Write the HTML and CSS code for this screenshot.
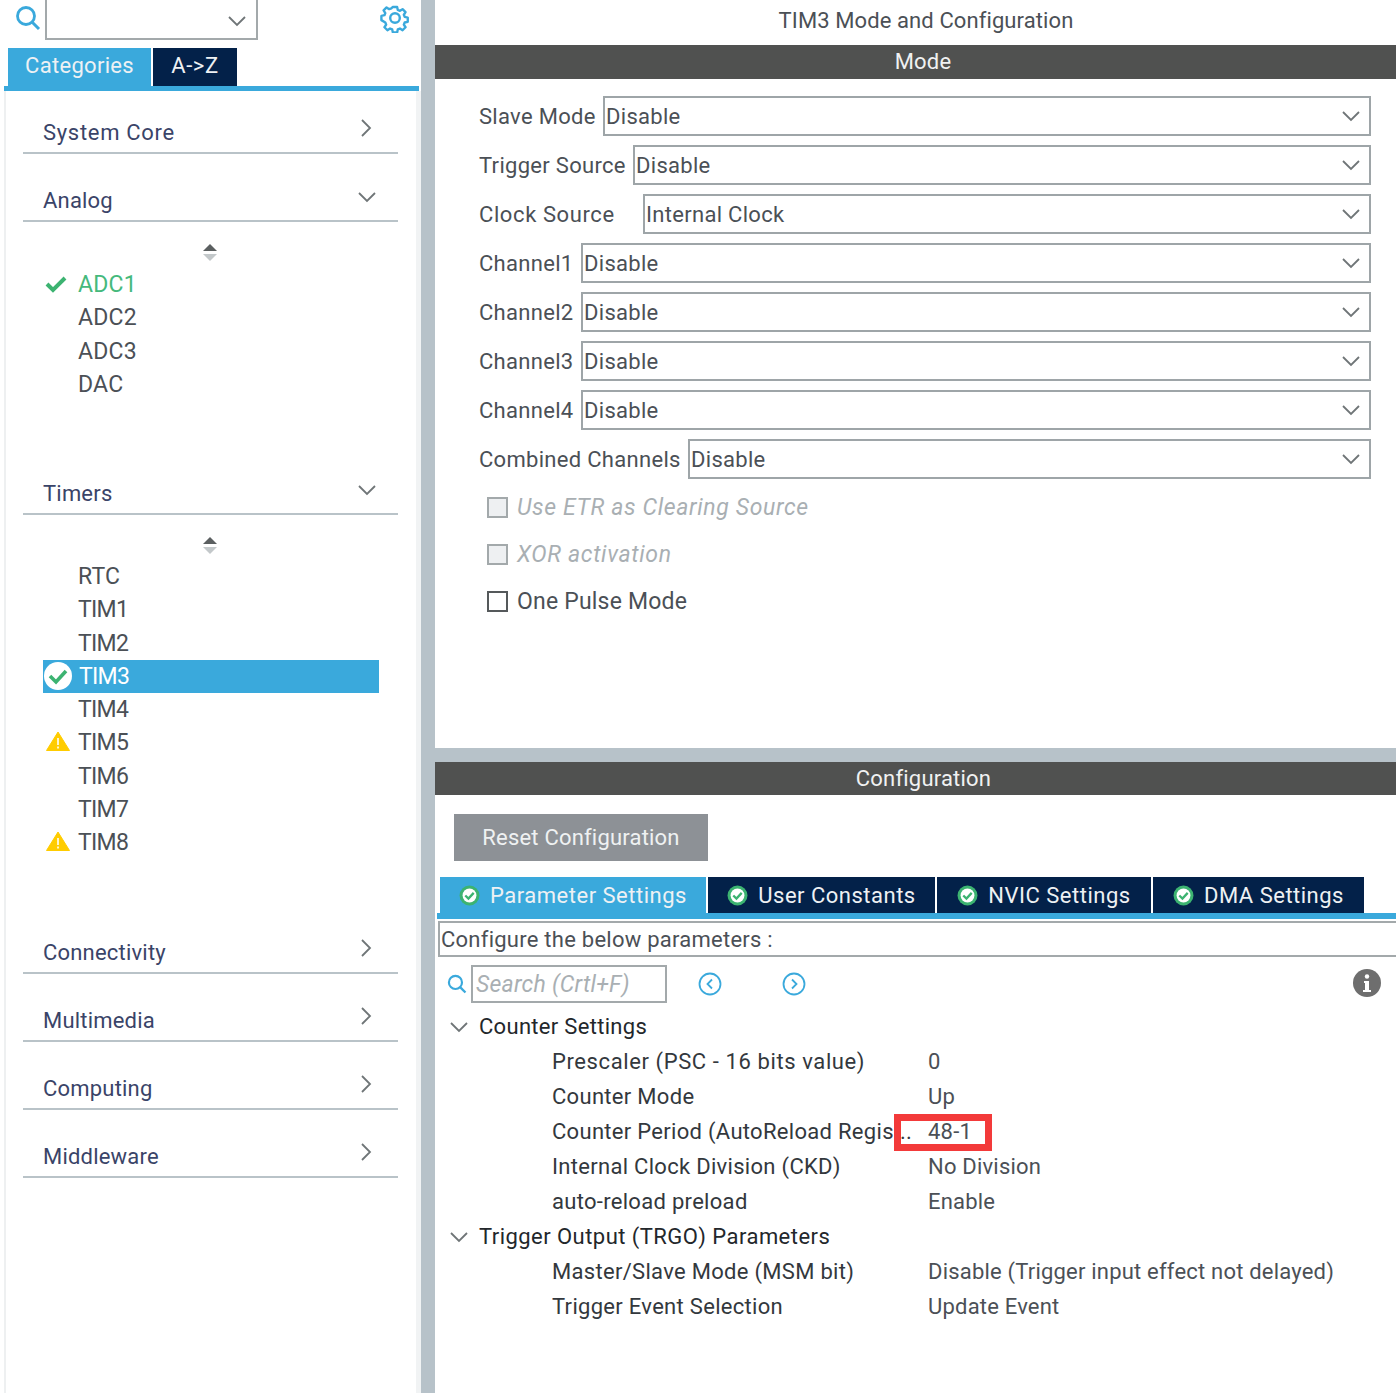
FILE: index.html
```html
<!DOCTYPE html>
<html lang="en">
<head>
<meta charset="utf-8">
<title>TIM3 Mode and Configuration</title>
<link rel="stylesheet" href="styles.css">
</head>
<body>
<svg width="0" height="0" class="defs">
  <symbol id="down" viewBox="0 0 20 12"><path d="M2 2l8 8 8-8" fill="none" stroke="#6f7577" stroke-width="1.8"/></symbol>
  <symbol id="right" viewBox="0 0 12 20"><path d="M2 2l8 8-8 8" fill="none" stroke="#6f7577" stroke-width="1.8"/></symbol>
  <symbol id="mag" viewBox="0 0 26 26"><circle cx="11" cy="11" r="8.5" fill="none" stroke="#3aa9dc" stroke-width="2.8"/><path d="M17 17l7 7" stroke="#3aa9dc" stroke-width="3"/></symbol>
  <symbol id="sort" viewBox="0 0 16 20"><path d="M8 1l7 7H1z" fill="#5b5f60"/><path d="M1 11h14l-7 7z" fill="#c3c8ca"/></symbol>
  <symbol id="warn" viewBox="0 0 24 20"><path d="M12 1L23.500 19.500H.5z" fill="#ffcc00" stroke="#ffcc00" stroke-linejoin="round"/><path d="M12 7v7M12 15.500v2" stroke="#fff" stroke-width="1.600"/></symbol>
  <symbol id="ok" viewBox="0 0 20 20"><circle cx="10" cy="10" r="9.500" fill="#3cb371"/><circle cx="10" cy="10" r="6.600" fill="#fff"/><path d="M6 10l3 3 5-5.500" fill="none" stroke="#3cb371" stroke-width="2.200"/></symbol>
</svg>

<div class="app">
  <aside class="side">
    <div class="topbar">
      <svg class="mag"><use href="#mag"/></svg>
      <div class="combo"><svg class="chev"><use href="#down"/></svg></div>
      <svg class="gear" viewBox="0 0 30 30"><path d="M12.500 2h5l.8 3.600 2.500 1 3.100-2 3.500 3.500-2 3.100 1 2.500 3.600.8v5l-3.600.8-1 2.500 2 3.100-3.500 3.500-3.100-2-2.500 1-.8 3.600h-5l-.8-3.600-2.500-1-3.100 2-3.500-3.500 2-3.100-1-2.500L-1 17.500v-5l3.600-.8 1-2.500-2-3.100 3.500-3.500 3.100 2 2.500-1z" transform="translate(2.250 2.250) scale(.85)" fill="none" stroke="#3aa9dc" stroke-width="2.800" stroke-linejoin="round"/><circle cx="15" cy="15" r="4.800" fill="none" stroke="#3aa9dc" stroke-width="2.400"/></svg>
    </div>
    <div class="tabs side-tabs">
      <div class="tab on">Categories</div>
      <div class="tab">A-&gt;Z</div>
    </div>
    <div class="cats">
      <div class="cat first">System Core<svg class="ar"><use href="#right"/></svg></div>
      <div class="cat">Analog<svg class="ad"><use href="#down"/></svg></div>
      <svg class="sort"><use href="#sort"/></svg>
      <ul class="items short">
        <li class="good"><svg class="tick" viewBox="0 0 22 18"><path d="M2 9l6 6L20 3" fill="none" stroke="#3cb371" stroke-width="4"/></svg>ADC1</li>
        <li>ADC2</li>
        <li>ADC3</li>
        <li>DAC</li>
      </ul>
      <div class="cat">Timers<svg class="ad"><use href="#down"/></svg></div>
      <svg class="sort"><use href="#sort"/></svg>
      <ul class="items tall">
        <li>RTC</li>
        <li class="t">TIM1</li>
        <li class="t">TIM2</li>
        <li class="t sel"><svg class="okbig" viewBox="0 0 28 28"><circle cx="14" cy="14" r="14" fill="#fff"/><path d="M6 14l6 6L22 9" fill="none" stroke="#3cb371" stroke-width="3.600"/></svg>TIM3</li>
        <li class="t">TIM4</li>
        <li class="t"><svg class="warn"><use href="#warn"/></svg>TIM5</li>
        <li class="t">TIM6</li>
        <li class="t">TIM7</li>
        <li class="t"><svg class="warn"><use href="#warn"/></svg>TIM8</li>
      </ul>
      <div class="cat">Connectivity<svg class="ar"><use href="#right"/></svg></div>
      <div class="cat">Multimedia<svg class="ar"><use href="#right"/></svg></div>
      <div class="cat">Computing<svg class="ar"><use href="#right"/></svg></div>
      <div class="cat">Middleware<svg class="ar"><use href="#right"/></svg></div>
    </div>
  </aside>

  <main class="main">
    <h1 class="title">TIM3 Mode and Configuration</h1>
    <div class="bar">Mode</div>
    <section class="mode">
      <div class="row"><label>Slave Mode</label><div class="sel-box s1">Disable<svg class="chev"><use href="#down"/></svg></div></div>
      <div class="row"><label>Trigger Source</label><div class="sel-box s2">Disable<svg class="chev"><use href="#down"/></svg></div></div>
      <div class="row"><label>Clock Source</label><div class="sel-box s3">Internal Clock<svg class="chev"><use href="#down"/></svg></div></div>
      <div class="row"><label>Channel1</label><div class="sel-box s4">Disable<svg class="chev"><use href="#down"/></svg></div></div>
      <div class="row"><label>Channel2</label><div class="sel-box s4">Disable<svg class="chev"><use href="#down"/></svg></div></div>
      <div class="row"><label>Channel3</label><div class="sel-box s4">Disable<svg class="chev"><use href="#down"/></svg></div></div>
      <div class="row"><label>Channel4</label><div class="sel-box s4">Disable<svg class="chev"><use href="#down"/></svg></div></div>
      <div class="row"><label>Combined Channels</label><div class="sel-box s5">Disable<svg class="chev"><use href="#down"/></svg></div></div>
      <div class="check off"><span class="box"></span>Use ETR as Clearing Source</div>
      <div class="check off"><span class="box"></span>XOR activation</div>
      <div class="check"><span class="box"></span>One Pulse Mode</div>
    </section>
    <div class="split"></div>
    <div class="bar cfg">Configuration</div>
    <section class="config">
      <div class="reset">Reset Configuration</div>
      <div class="tabs cfg-tabs">
        <div class="tab on"><svg class="ok"><use href="#ok"/></svg>Parameter Settings</div>
        <div class="tab"><svg class="ok"><use href="#ok"/></svg>User Constants</div>
        <div class="tab"><svg class="ok"><use href="#ok"/></svg>NVIC Settings</div>
        <div class="tab"><svg class="ok"><use href="#ok"/></svg>DMA Settings</div>
      </div>
      <div class="note">Configure the below parameters :</div>
      <div class="search">
        <svg class="mag small"><use href="#mag"/></svg>
        <div class="find">Search (Crtl+F)</div>
        <svg class="nav" viewBox="0 0 24 24"><circle cx="12" cy="12" r="10.500" fill="none" stroke="#3aa9dc" stroke-width="1.800"/><path d="M14 7.500L9.500 12l4.500 4.500" fill="none" stroke="#3aa9dc" stroke-width="1.800"/></svg>
        <svg class="nav" viewBox="0 0 24 24"><circle cx="12" cy="12" r="10.500" fill="none" stroke="#3aa9dc" stroke-width="1.800"/><path d="M10 7.500l4.500 4.500-4.500 4.500" fill="none" stroke="#3aa9dc" stroke-width="1.800"/></svg>
        <svg class="info" viewBox="0 0 28 28"><circle cx="14" cy="14" r="14" fill="#6e6e6e"/><circle cx="14" cy="7.500" r="2.200" fill="#fff"/><path d="M11 12h5v9h2v2h-8v-2h2v-7h-1z" fill="#fff"/></svg>
      </div>
      <div class="tree">
        <div class="group"><svg class="tw"><use href="#down"/></svg>Counter Settings</div>
        <div class="param wide"><span>Prescaler (PSC - 16 bits value)</span><span>0</span></div>
        <div class="param"><span>Counter Mode</span><span>Up</span></div>
        <div class="param marked"><span>Counter Period (AutoReload Regis...</span><span>48-1</span><i class="red"></i></div>
        <div class="param"><span>Internal Clock Division (CKD)</span><span>No Division</span></div>
        <div class="param"><span>auto-reload preload</span><span>Enable</span></div>
        <div class="group long"><svg class="tw"><use href="#down"/></svg>Trigger Output (TRGO) Parameters</div>
        <div class="param"><span>Master/Slave Mode (MSM bit)</span><span>Disable (Trigger input effect not delayed)</span></div>
        <div class="param"><span>Trigger Event Selection</span><span>Update Event</span></div>
      </div>
    </section>
  </main>
</div>
</body>
</html>
```
FILE: styles.css
```css
* { box-sizing: border-box; }
html, body { margin: 0; padding: 0; }
body { width: 1396px; height: 1393px; overflow: hidden; background: #fff; font-family: Roboto, "Liberation Sans", sans-serif; font-size: 22px; color: #444a50; letter-spacing: .2px; }
.defs { position: absolute; }
.app { display: flex; height: 1393px; }

/* left column */
.side { width: 435px; flex: none; border-right: 14px solid #b7c2c9; display: flex; flex-direction: column; }
.topbar { height: 48px; display: flex; padding-left: 15px; position: relative; }
.mag { width: 26px; height: 26px; margin-top: 5px; flex: none; }
.combo { width: 213px; height: 40px; margin-left: 4px; border: 2px solid #a3a9ab; border-top: 0; position: relative; }
.combo .chev { position: absolute; right: 9px; top: 15px; width: 20px; height: 12px; }
.gear { width: 30px; height: 30px; margin: 3px 0 0 122px; }
.tabs { display: flex; }
.tab { background: #032149; color: #eef1f4; display: flex; align-items: center; justify-content: center; }
.tab.on { background: #3aa9dc; }
.side-tabs { height: 43px; margin-left: 4px; width: 415px; padding-left: 4px; gap: 2px; border-bottom: 5px solid #3aa9dc; }
.side-tabs .tab { letter-spacing: .3px; line-height: 36px; align-items: flex-start; }
.side-tabs .tab:first-child { width: 143px; }
.side-tabs .tab:last-child { width: 84px; letter-spacing: .6px; }
.cats { margin-left: 4px; width: 417px; flex: 1; border-left: 2px solid #eef0f1; border-right: 5px solid #f1f3f4; padding: 0 18px 0 17px; display: flex; flex-direction: column; align-items: stretch; }
.cat { height: 68px; margin: 0; border-bottom: 2px solid #b9c3c8; position: relative; display: flex; align-items: flex-end; padding: 0 0 4px 20px; color: #3a4468; line-height: 30px; flex: none; }
.cat.first { height: 63px; letter-spacing: .7px; }
.ar, .ad { position: absolute; }
.ar { right: 26px; bottom: 14px; width: 12px; height: 20px; }
.ad { right: 21px; bottom: 17px; width: 20px; height: 12px; }
.sort { width: 16px; height: 20px; align-self: flex-start; margin: 21px 0 0 179px; flex: none; }
.items { list-style: none; margin: 5px 0 0; padding: 0; flex: none; font-size: 23px; }
.items.short { height: 179px; }
.items.tall { height: 346px; margin-top: 4px; }
.items li { height: 33.300px; line-height: 33.300px; padding-left: 35px; position: relative; margin-left: 20px; width: 336px; color: #4b5056; }
.items .t { letter-spacing: -.7px; }
.items .good { color: #45b97c; }
.tick { position: absolute; left: 2px; top: 7px; width: 22px; height: 18px; }
.items .sel { background: #3aa9dc; color: #fff; padding-left: 36px; }
.okbig { position: absolute; left: 1px; top: 2px; width: 28px; height: 28px; }
.warn { position: absolute; left: 3px; top: 5px; width: 24px; height: 20px; }

/* right column */
.main { flex: 1; min-width: 0; position: relative; }
.title { margin: 0; height: 45px; font-size: 22px; font-weight: 400; line-height: 41px; text-align: center; padding-left: 21px; letter-spacing: .1px; color: #4b5056; background: #fff; }
.bar { height: 34px; background: #505150; color: #f0f1f2; line-height: 33px; text-align: center; padding-left: 15px; }
.bar.cfg { height: 33px; padding-left: 16px; }
.mode { height: 669px; background: #fff; padding: 17px 25px 0 44px; }
.row { display: flex; height: 40px; margin-bottom: 9px; }
.row label { flex: none; line-height: 41px; color: #4b5056; letter-spacing: .3px; }
.row:nth-child(1) label { width: 124px; }
.row:nth-child(2) label { width: 154px; }
.row:nth-child(3) label { width: 164px; letter-spacing: .6px; }
.row:nth-child(4) label, .row:nth-child(5) label, .row:nth-child(6) label, .row:nth-child(7) label { width: 102px; }
.row:nth-child(8) label { width: 209px; }
.sel-box { flex: 1; border: 2px solid #9ea5a8; line-height: 37px; padding-left: 1px; position: relative; color: #4b5056; letter-spacing: .3px; }
.sel-box .chev { position: absolute; right: 8px; top: 12px; width: 20px; height: 12px; }
.check { display: flex; align-items: center; height: 24px; margin: 0 0 23px 8px; color: #4b5056; font-size: 23px; }
.row + .check { margin-top: 16px; }
.check .box { width: 21px; height: 21px; border: 2px solid #55595b; margin-right: 9px; flex: none; }
.check.off { color: #a9afb3; font-style: italic; letter-spacing: .65px; }
.check.off .box { background: #eef0f2; border-color: #a3a9ab; }
.split { height: 14px; background: #b7c2c9; }
.config { padding: 19px 0 0; background: #fff; }
.reset { width: 254px; height: 47px; margin-left: 19px; background: #8d9196; color: #eff1f2; text-align: center; line-height: 47px; letter-spacing: .2px; }
.cfg-tabs { margin: 16px 0 0 2px; height: 42px; gap: 2px; padding-left: 3px; border-bottom: 6px solid #3aa9dc; }
.cfg-tabs .tab { letter-spacing: .5px; }
.cfg-tabs .tab:nth-child(1) { width: 266px; }
.cfg-tabs .tab:nth-child(2) { width: 227px; }
.cfg-tabs .tab:nth-child(3) { width: 214px; }
.cfg-tabs .tab:nth-child(4) { width: 211px; }
.ok { width: 21px; height: 21px; margin-right: 10px; flex: none; }
.note { height: 36px; margin: 2px 0 0 3px; border: 2px solid #a3a9ab; border-right: 0; line-height: 34px; padding-left: 1px; letter-spacing: .25px; color: #4b5056; }
.search { height: 38px; display: flex; align-items: center; margin-top: 8px; padding-left: 12px; position: relative; }
.mag.small { width: 20px; height: 20px; margin: 0; }
.find { width: 196px; height: 38px; border: 2px solid #a3a9ab; margin-left: 4px; padding-left: 3px; line-height: 35px; color: #a9afb3; font-style: italic; font-size: 23px; letter-spacing: .25px; }
.nav { width: 24px; height: 24px; flex: none; margin-left: 31px; }
.nav + .nav { margin-left: 60px; }
.info { width: 28px; height: 28px; position: absolute; right: 15px; top: 4px; }
.tree { margin-top: 6px; }
.group, .param { height: 35px; line-height: 35px; white-space: nowrap; }
.group { padding-left: 44px; position: relative; color: #23272b; letter-spacing: .3px; }
.group.long { letter-spacing: .45px; }
.tw { position: absolute; left: 14px; top: 12px; width: 20px; height: 12px; }
.param { display: flex; padding-left: 117px; position: relative; color: #4b5056; }
.param span:first-child { width: 376px; flex: none; color: #33383d; overflow: hidden; letter-spacing: .3px; }
.param.wide span:first-child { letter-spacing: .6px; }
.red { position: absolute; left: 459px; top: 0; width: 98px; height: 37px; border: 7px solid #f33a3a; }
```
